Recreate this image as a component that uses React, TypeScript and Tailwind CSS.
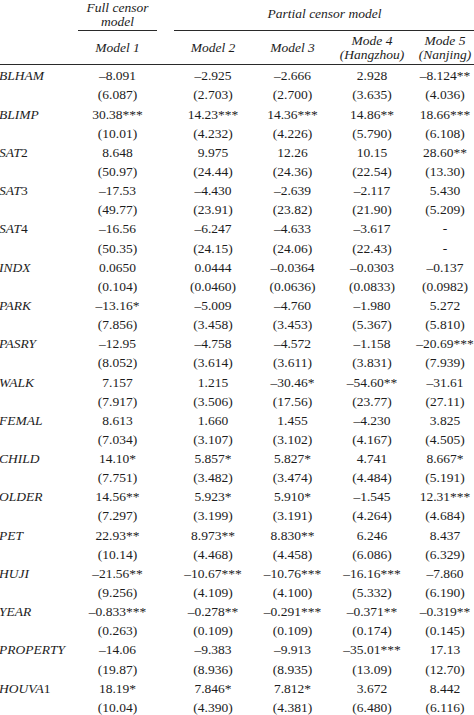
import React from "react";

type Row = { label: React.ReactNode; vals: string[]; se: string[] };

const It = ({ t, n }: { t: string; n?: string }) => (
  <>
    <span className="italic">{t}</span>
    {n ? <span>{n}</span> : null}
  </>
);

const rows: Row[] = [
  { label: <It t="BLHAM" />, vals: ["–8.091", "–2.925", "–2.666", "2.928", "–8.124**"], se: ["(6.087)", "(2.703)", "(2.700)", "(3.635)", "(4.036)"] },
  { label: <It t="BLIMP" />, vals: ["30.38***", "14.23***", "14.36***", "14.86**", "18.66***"], se: ["(10.01)", "(4.232)", "(4.226)", "(5.790)", "(6.108)"] },
  { label: <It t="SAT" n="2" />, vals: ["8.648", "9.975", "12.26", "10.15", "28.60**"], se: ["(50.97)", "(24.44)", "(24.36)", "(22.54)", "(13.30)"] },
  { label: <It t="SAT" n="3" />, vals: ["–17.53", "–4.430", "–2.639", "–2.117", "5.430"], se: ["(49.77)", "(23.91)", "(23.82)", "(21.90)", "(5.209)"] },
  { label: <It t="SAT" n="4" />, vals: ["–16.56", "–6.247", "–4.633", "–3.617", "-"], se: ["(50.35)", "(24.15)", "(24.06)", "(22.43)", "-"] },
  { label: <It t="INDX" />, vals: ["0.0650", "0.0444", "–0.0364", "–0.0303", "–0.137"], se: ["(0.104)", "(0.0460)", "(0.0636)", "(0.0833)", "(0.0982)"] },
  { label: <It t="PARK" />, vals: ["–13.16*", "–5.009", "–4.760", "–1.980", "5.272"], se: ["(7.856)", "(3.458)", "(3.453)", "(5.367)", "(5.810)"] },
  { label: <It t="PASRY" />, vals: ["–12.95", "–4.758", "–4.572", "–1.158", "–20.69***"], se: ["(8.052)", "(3.614)", "(3.611)", "(3.831)", "(7.939)"] },
  { label: <It t="WALK" />, vals: ["7.157", "1.215", "–30.46*", "–54.60**", "–31.61"], se: ["(7.917)", "(3.506)", "(17.56)", "(23.77)", "(27.11)"] },
  { label: <It t="FEMAL" />, vals: ["8.613", "1.660", "1.455", "–4.230", "3.825"], se: ["(7.034)", "(3.107)", "(3.102)", "(4.167)", "(4.505)"] },
  { label: <It t="CHILD" />, vals: ["14.10*", "5.857*", "5.827*", "4.741", "8.667*"], se: ["(7.751)", "(3.482)", "(3.474)", "(4.484)", "(5.191)"] },
  { label: <It t="OLDER" />, vals: ["14.56**", "5.923*", "5.910*", "–1.545", "12.31***"], se: ["(7.297)", "(3.199)", "(3.191)", "(4.264)", "(4.684)"] },
  { label: <It t="PET" />, vals: ["22.93**", "8.973**", "8.830**", "6.246", "8.437"], se: ["(10.14)", "(4.468)", "(4.458)", "(6.086)", "(6.329)"] },
  { label: <It t="HUJI" />, vals: ["–21.56**", "–10.67***", "–10.76***", "–16.16***", "–7.860"], se: ["(9.256)", "(4.109)", "(4.100)", "(5.332)", "(6.190)"] },
  { label: <It t="YEAR" />, vals: ["–0.833***", "–0.278**", "–0.291***", "–0.371**", "–0.319**"], se: ["(0.263)", "(0.109)", "(0.109)", "(0.174)", "(0.145)"] },
  { label: <It t="PROPERTY" />, vals: ["–14.06", "–9.383", "–9.913", "–35.01***", "17.13"], se: ["(19.87)", "(8.936)", "(8.935)", "(13.09)", "(12.70)"] },
  { label: <It t="HOUVA" n="1" />, vals: ["18.19*", "7.846*", "7.812*", "3.672", "8.442"], se: ["(10.04)", "(4.390)", "(4.381)", "(6.480)", "(6.116)"] },
];

const cols = "grid grid-cols-[78px_79px_17px_78px_81px_78px_68px]";

function DataRow({ label, vals }: { label: React.ReactNode; vals: string[] }) {
  return (
    <div className={`${cols} h-[19.15px] items-center leading-[15px]`}>
      <div className="-ml-[1px] whitespace-nowrap">{label}</div>
      <div className="text-center whitespace-nowrap">{vals[0]}</div>
      <div />
      {vals.slice(1).map((v, i) => (
        <div key={i} className="text-center whitespace-nowrap">
          {v}
        </div>
      ))}
    </div>
  );
}

export default function App() {
  return (
    <div className="w-[474px] h-[715px] overflow-hidden bg-white text-[#1c1c1c] [font-family:'Liberation_Serif',serif] text-[13.5px]">
      <div className="w-[479px]">
        {/* header row 1 */}
        <div className={`${cols} h-[31px]`}>
          <div />
          <div className="border-b border-[#2a2a2a] italic text-center leading-[13.5px] pt-[1px]">
            <div>Full censor</div>
            <div>model</div>
          </div>
          <div />
          <div className="col-span-4 border-b border-[#2a2a2a] italic flex items-center justify-center pb-[2px] pr-[4px]">
            Partial censor model
          </div>
        </div>
        {/* header row 2 */}
        <div className={`${cols} h-[34px] border-b-[1.5px] border-[#2a2a2a] italic leading-[13.5px]`}>
          <div />
          <div className="flex items-center justify-center">Model 1</div>
          <div />
          <div className="flex items-center justify-center">Model 2</div>
          <div className="flex items-center justify-center">Model 3</div>
          <div className="flex flex-col items-center justify-center text-center">
            <span>Mode 4</span>
            <span>(Hangzhou)</span>
          </div>
          <div className="flex flex-col items-center justify-center text-center">
            <span>Mode 5</span>
            <span>(Nanjing)</span>
          </div>
        </div>
        {/* data */}
        <div className="pt-[1.2px]">
          {rows.map((r, i) => (
            <React.Fragment key={i}>
              <DataRow label={r.label} vals={r.vals} />
              <DataRow label={null} vals={r.se} />
            </React.Fragment>
          ))}
        </div>
      </div>
    </div>
  );
}
